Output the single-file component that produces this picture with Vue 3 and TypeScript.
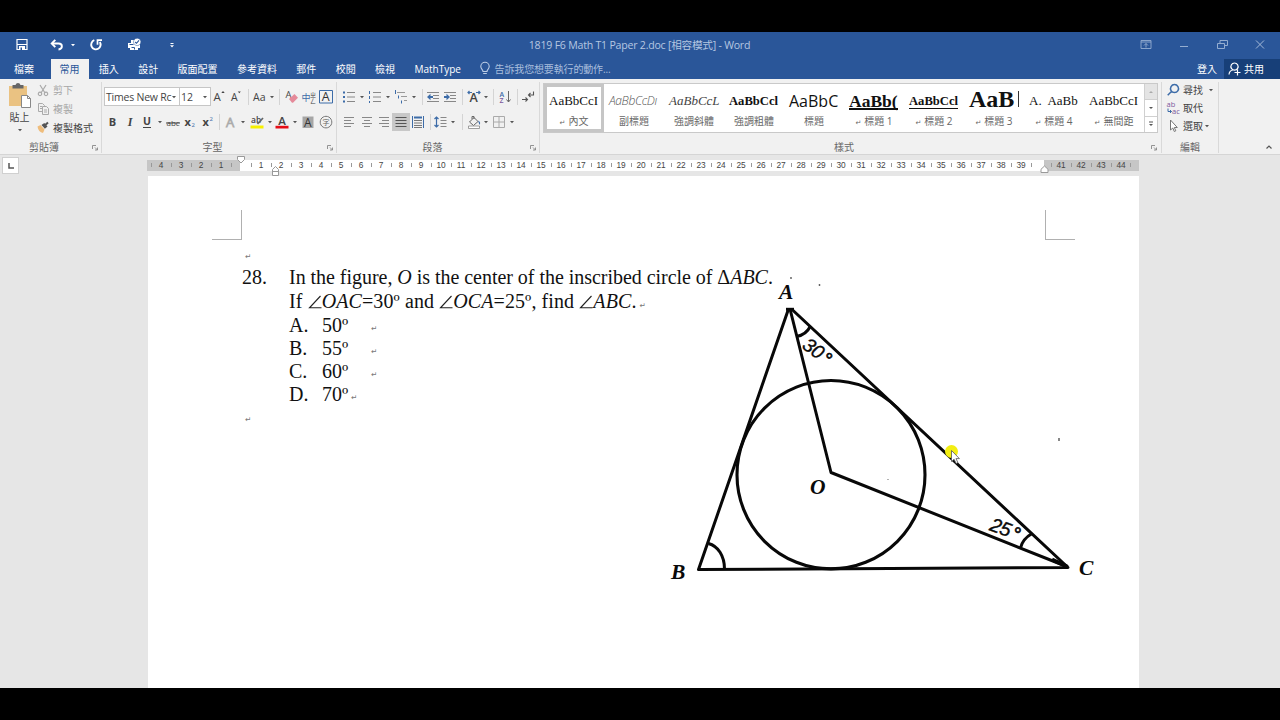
<script setup lang="ts">
import { h } from 'vue'

interface Shape {
  d?: string
  f?: string
  s?: string
  w?: number
  t?: string
  x?: number
  y?: number
  size?: number
  font?: string
  weight?: number
  italic?: boolean
}
interface Tool {
  icon: string
  w: number
  on?: boolean
}
interface StyleItem {
  sample: string
  label: string
  kind: string
  mark?: boolean
}

const dark = '#444'
const blue = '#3d6ca8'
const sans = 'Open Sans'
const txt = (t: string, x: number, y: number, size: number, f = dark, weight = 400, italic = false, font = sans): Shape =>
  ({ t, x, y, size, f, weight, italic, font })
const line = (d: string, s = '#666', w = 1): Shape => ({ d, s, w, f: 'none' })
const fill = (d: string, f = dark): Shape => ({ d, f })

const icons: Record<string, Shape[]> = {
  save: [line('M5 4.500h10v10H5z', '#fff', 1.200), line('M5 9.500h10', '#fff', 1), fill('M7 11h6v4H7z', '#fff'), fill('M8.500 12.500h1.500V15H8.500z', '#2a5699')],
  undo: [line('M5 8.500h6.500c4.500 0 4.500 5.500 0 6', '#fff', 1.900), line('M8.300 4.800 4.700 8.500l3.600 3.700', '#fff', 1.900)],
  redo: [line('M8.300 5.200A4.700 4.700 0 1 0 13.800 7', '#fff', 1.900), line('M11.500 9.800V5.200H16', '#fff', 1.700)],
  print: [fill('M4 8h3V5h6v3h3v5h-2v2H6v-2H4z', '#fff'), line('M5.500 9.500h4m-2 3h3v2', '#2a5699'), { d: 'M13.200 3.200a3.700 3.700 0 1 1-.01 0z', f: '#fff', s: '#2a5699', w: .5 }, line('M11.200 7l1.300 1.300 2.500-3', '#2a5699', 1.100)],
  customize: [line('M8.500 8.500h3', '#fff'), fill('M8 10.300h4L10 12.500z', '#fff')],
  downw: [fill('M8 9h4l-2 2.300z', '#fff')],
  down: [fill('M8 9h4l-2 2.300z', '#555')],
  sep: [line('M10.500 2v16', '#d4d4d4')],
  cut: [line('M7 5l5 8M13 5l-5 8', '#a9a9a9', 1.200), line('M7 12.200a1.700 1.700 0 1 0 .01 0M13 12.200a1.700 1.700 0 1 0 .01 0', '#a9a9a9', 1.200)],
  copy: [line('M5.500 4.500h4l2 2v6h-6z', '#aaa'), { d: 'M9.500 7.500h4l2 2v6h-6z', f: '#f1f1f1', s: '#aaa', w: 1 }, line('M7 7.500h2m-2 2h2m2 1.500h3m-3 2h3', '#aaa')],
  painter: [fill('M4.500 8.500l3-1.500 4 4.500-1.500 3.500c-3-.5-5-3-5.500-6.500z', '#efbd7c'), fill('M8.500 7l2.800-2 3.200 3.600-2.600 2.200z', '#555'), line('M12 7.200l3-2.700', '#555', 2)],
  bulb: [line('M8 12.500c0-2-2.200-2.500-2.200-5a4.200 4.200 0 0 1 8.400 0c0 2.500-2.200 3-2.200 5zM8.200 14.500h3.600', '#bccde6', 1.100)],
  grow: [txt('A', 3.500, 14, 11.500), fill('M11.300 6l1.700-2 1.700 2z', '#444')],
  shrink: [txt('A', 4, 14, 10.500), fill('M10.800 4.500l1.500 1.700 1.500-1.700z', '#444')],
  case: [txt('Aa', 3, 14, 10.500)],
  eraser: [txt('A', 3.500, 11, 9.500), fill('M7 12l5.500-5 3.500 3.800-5 5h-1z', '#e58a9a')],
  phonetic: [txt('中', 2.500, 13.500, 9, blue, 400, false, 'Noto Sans CJK TC'), txt('ㄓ', 11, 9.500, 6, dark, 400, false, 'Noto Sans CJK TC'), txt('ㄥ', 11, 15.500, 6, dark, 400, false, 'Noto Sans CJK TC')],
  boxed: [line('M3.500 3.500h13v12.500h-13z', blue), txt('A', 5.700, 14.200, 12.500, '#333')],
  bold: [txt('B', 6.800, 14, 11, dark, 700)],
  italic: [txt('I', 7.800, 14, 12, dark, 700, true, 'Liberation Serif')],
  under: [txt('U', 6, 13, 10.500, dark, 700), line('M6 15.500h8', dark)],
  strike: [txt('abc', 3.500, 13.500, 8, dark, 400), line('M3 11h14', dark)],
  sub: [txt('x', 4.500, 13.500, 11, dark, 700), txt('2', 11.500, 15, 6, blue)],
  sup: [txt('x', 4.500, 14, 11, dark, 700), txt('2', 11.500, 9, 6, blue)],
  effect: [{ ...txt('A', 5, 14.500, 13, '#fafafa'), s: '#aaa', w: .8 }],
  high: [txt('ab', 4, 11, 8.500, dark, 600), line('M10.500 12l5.500-6', '#666', 1.700), fill('M3.500 13.500h13v3h-13z', '#f6f000')],
  color: [txt('A', 6.200, 12.500, 11.500, dark, 600), fill('M3.500 13.800h13v2.700h-13z', '#e60d16')],
  shade: [fill('M4.500 4.500h11v11.500h-11z', '#a6a6a6'), txt('A', 6, 14.500, 12, '#333')],
  circled: [line('M10 4.300a5.800 5.800 0 1 0 .01 0', '#777'), txt('字', 6.500, 12.700, 7, '#666', 400, false, 'Noto Sans CJK TC')],
  bullets: [fill('M4 4.500h2v2H4zm0 4.500h2v2H4zm0 4.500h2v2H4z', blue), line('M8 5.500h8m-8 4.500h8m-8 4.500h8', '#888')],
  numbers: [line('M4.500 4v3m0 2v3m0 2v2', blue), line('M8 5.500h8m-8 4.500h8m-8 4.500h8', '#888')],
  multi: [line('M4.500 3v4m3 1.500v3m3 2v3', blue), line('M6 5.500h8m-4 4h6m-3 4h3', '#999')],
  outdent: [line('M4 5.500h12M4 14.500h12m-6-6h6m-6 3h6', '#888'), fill('M4 10l3.500-3.200v2.200H10v2H7.500v2.200z', blue)],
  indent: [line('M4 5.500h12M4 14.500h12m-6-6h6m-6 3h6', '#888'), fill('M10 10L6.500 6.800V9H4v2h2.500v2.200z', blue)],
  scale: [txt('A', 5.500, 15, 12.500, dark, 600), line('M4 5.500h4m4 0h4M5.500 4L4 5.500 5.500 7m9-3L16 5.500 14.500 7', blue, 1.200)],
  sort: [txt('A', 4.500, 9.500, 7, blue, 600), txt('Z', 4.500, 16, 7, '#7d5a9d', 600), line('M13.500 4v11m-2-2.500l2 2.500 2-2.500', '#666')],
  marks: [line('M15.500 4.500v3.500H10.500m2-2l-2 2 2 2M4 12.500H9.500m-2-2l2 2-2 2', '#555', 1.100)],
  left: [line('M5 5.500h10m-10 3h7m-7 3h10m-10 3h7', '#888')],
  center: [line('M5 5.500h10m-8 3h6m-8 3h10m-8 3h6', '#888')],
  right: [line('M5 5.500h10m-7 3h7m-10 3h10m-7 3h7', '#888')],
  justify: [line('M4.500 5.500h11m-11 3h11m-11 3h11m-11 3h11', '#555')],
  distribute: [line('M4.500 4v12m11-12v12', blue), line('M6 5.500h8', blue, 2), line('M6 8.500h8m-8 2.500h8m-8 2.500h8m-8 2h8', '#777')],
  spacing: [line('M5.500 5v10M3.500 7l2-2 2 2m-4 6l2 2 2-2', blue, 1.200), line('M9.500 5.500h6m-6 3h6m-6 3h6m-6 3h6', '#888')],
  bucket: [line('M5.500 10l4.500-4.500 4 4-4.500 4zM8 7V4.500h2V7', '#666'), fill('M14 8.500c2.500 1 2.500 3 1.500 4.500z', blue), { d: 'M4.500 14h11v2.500h-11z', f: '#fff', s: '#888', w: .8 }],
  borders: [line('M4.500 4.500h11v11h-11zM10 4.500v11M4.500 10h11', '#aaa')],
  find: [line('M11.500 4.500a4 4 0 1 0 .01 0M8.700 11.300L4.700 15.300', '#3d6ca8', 1.500)],
  replace: [txt('ab', 3.500, 9, 7.500, '#7d5a9d'), txt('ac', 9, 15.500, 7.500, '#7d5a9d'), line('M5 10.500v3h3.500M7 12l1.500 1.500L7 15', blue)],
  select: [{ d: 'M7.500 4v10l2.300-2 1.500 3.500 1.500-.7-1.500-3.300h3z', f: '#fff', s: '#777', w: 1 }],
  launcher: [line('M7.500 12V8.500H11M10 10.500l2.500 2.500m0-2.500V13H10', '#888', .9)],
  ribbon: [line('M5 5.500h10v8H5zM5 7h10M10 12.500V8.500m-2 2l2-2 2 2', '#94add0', .9)],
  min: [line('M6 11.500h8', '#94add0')],
  restore: [line('M5.500 8.500h7v5h-7zM8 8V5.500h7.500v5H13', '#94add0')],
  close: [line('M6 5.500l8 8m0-8l-8 8', '#a4b9d8')],
  person: [line('M10.500 4a3.600 3.600 0 1 0 .01 0M5 15.500c.3-3 2-4.300 4-4.500M13.500 10.500v6m-3-3h6', '#fff', 1.200)],
  caret: [line('M7.500 11.500L10 9l2.500 2.500', '#555', 1.200)],
}

const t = (icon: string, w: number, on = false): Tool => ({ icon, w, on })
const quickTools: Tool[] = [t('save', 24), t('gap', 11), t('undo', 24), t('downw', 7), t('gap', 8), t('redo', 24), t('gap', 13), t('print', 26), t('gap', 15), t('customize', 20)]
const windowTools: Tool[] = [t('ribbon', 38), t('min', 38), t('restore', 38), t('close', 38)]
const fontTop: Tool[] = [t('grow', 18), t('shrink', 16), t('sep', 6), t('case', 18), t('down', 5), t('sep', 10), t('eraser', 16), t('phonetic', 18), t('boxed', 16)]
const fontBottom: Tool[] = [t('bold', 18), t('italic', 18), t('under', 16), t('down', 10), t('strike', 16), t('sub', 18), t('sup', 18), t('sep', 4), t('effect', 20), t('down', 4), t('high', 23), t('down', 4), t('color', 20), t('down', 6), t('shade', 20), t('circled', 16)]
const paraTop: Tool[] = [t('bullets', 18), t('down', 8), t('numbers', 18), t('down', 8), t('multi', 18), t('down', 7), t('sep', 10), t('outdent', 12), t('indent', 22), t('sep', 2), t('scale', 21), t('down', 3), t('sep', 12), t('sort', 12), t('sep', 12), t('marks', 10)]
const paraBottom: Tool[] = [t('left', 18), t('center', 18), t('right', 16), t('justify', 18, true), t('distribute', 16), t('sep', 8), t('spacing', 14), t('down', 10), t('sep', 8), t('bucket', 16), t('down', 8), t('borders', 18), t('down', 8)]

const tabs: string[] = ['檔案', '常用', '插入', '設計', '版面配置', '參考資料', '郵件', '校閱', '檢視', 'MathType']

const styles: StyleItem[] = [
  { sample: 'AaBbCcI', label: '內文', kind: 'serif', mark: true },
  { sample: 'AaBbCcDı', label: '副標題', kind: 'sub' },
  { sample: 'AaBbCcL', label: '強調斜體', kind: 'serif slant' },
  { sample: 'AaBbCcl', label: '強調粗體', kind: 'serif strong' },
  { sample: 'AaBbC', label: '標題', kind: 'title' },
  { sample: 'AaBb(', label: '標題 1', kind: 'h1', mark: true },
  { sample: 'AaBbCcl', label: '標題 2', kind: 'serif strong lined', mark: true },
  { sample: 'AaB', label: '標題 3', kind: 'h3', mark: true },
  { sample: 'A.  AaBb', label: '標題 4', kind: 'serif', mark: true },
  { sample: 'AaBbCcI', label: '無間距', kind: 'serif', mark: true },
]

const ruler: string[] = []
for (let n = -4; n <= 44; n++) ruler.push(n === 0 || n === 40 ? '' : String(Math.abs(n)))

const answers = [
  { key: 'A.', value: '50º' },
  { key: 'B.', value: '55º' },
  { key: 'C.', value: '60º' },
  { key: 'D.', value: '70º' },
]

const Icon = (p: { name: string }) =>
  h('svg', { class: 'icon', width: 20, height: 20, viewBox: '0 0 20 20' },
    (icons[p.name] ?? []).map(s => s.t
      ? h('text', { x: s.x, y: s.y, fill: s.f, stroke: s.s, 'stroke-width': s.w, 'font-size': s.size, 'font-family': s.font, 'font-weight': s.weight, 'font-style': s.italic ? 'italic' : 'normal' }, s.t)
      : h('path', { d: s.d, fill: s.f ?? 'none', stroke: s.s ?? 'none', 'stroke-width': s.w })))
Icon.props = ['name']
</script>

<template>
  <div class="screen">
    <header class="top">
      <div class="titlebar">
        <div class="tools quick">
          <span v-for="(q, i) in quickTools" :key="i" class="tool" :style="{ width: q.w + 'px' }"><Icon :name="q.icon" /></span>
        </div>
        <div class="doc-title">1819 F6 Math T1 Paper 2.doc [相容模式] - Word</div>
        <div class="tools window">
          <span v-for="q in windowTools" :key="q.icon" class="tool" :style="{ width: q.w + 'px' }"><Icon :name="q.icon" /></span>
        </div>
      </div>
      <nav class="tabs">
        <span v-for="tab in tabs" :key="tab" class="tab" :class="{ active: tab === '常用' }">{{ tab }}</span>
        <span class="tell"><Icon name="bulb" /><span>告訴我您想要執行的動作...</span></span>
        <span class="login">登入</span>
        <span class="share"><Icon name="person" /><span>共用</span></span>
      </nav>
    </header>

    <section class="ribbon">
      <div class="group clipboard">
        <div class="body">
          <div class="paste">
            <svg width="26" height="27" viewBox="0 0 26 27">
              <path d="M2 4h18v20H2z" fill="#eac282" />
              <path d="M5.500 3h3a2.600 2.600 0 0 1 5 0h3v3.500h-11z" fill="#666" />
              <path d="M14.500 13.500h6l3 3v9h-9z" fill="#fff" stroke="#888" />
              <path d="M20.500 13.500v3h3" fill="none" stroke="#888" />
            </svg>
            <span>貼上</span>
            <Icon name="down" />
          </div>
          <div class="cmds">
            <span class="cmd off"><Icon name="cut" />剪下</span>
            <span class="cmd off"><Icon name="copy" />複製</span>
            <span class="cmd"><Icon name="painter" />複製格式</span>
          </div>
        </div>
        <div class="label">剪貼簿<span class="launch"><Icon name="launcher" /></span></div>
      </div>

      <div class="group font">
        <div class="row">
          <span class="combo face"><b>Times New Rc</b><Icon name="down" /></span>
          <span class="combo size"><b>12</b><Icon name="down" /></span>
          <span v-for="(q, i) in fontTop" :key="i" class="tool" :style="{ width: q.w + 'px' }"><Icon :name="q.icon" /></span>
        </div>
        <div class="row">
          <span v-for="(q, i) in fontBottom" :key="i" class="tool" :style="{ width: q.w + 'px' }"><Icon :name="q.icon" /></span>
        </div>
        <div class="label">字型<span class="launch"><Icon name="launcher" /></span></div>
      </div>

      <div class="group para">
        <div class="row">
          <span v-for="(q, i) in paraTop" :key="i" class="tool" :style="{ width: q.w + 'px' }"><Icon :name="q.icon" /></span>
        </div>
        <div class="row">
          <span v-for="(q, i) in paraBottom" :key="i" class="tool" :class="{ on: q.on }" :style="{ width: q.w + 'px' }"><Icon :name="q.icon" /></span>
        </div>
        <div class="label">段落<span class="launch"><Icon name="launcher" /></span></div>
      </div>

      <div class="group styles">
        <div class="gallery">
          <div v-for="(s, i) in styles" :key="i" class="style" :class="{ chosen: i === 0 }">
            <span class="sample" :class="s.kind"><span>{{ s.sample }}</span></span>
            <span class="name"><i v-if="s.mark">↵</i>{{ s.label }}</span>
          </div>
          <div class="scroll">
            <span class="dim"><svg width="6" height="4" viewBox="0 0 6 4"><path d="M1 3h4L3 1z" fill="#aaa" /></svg></span>
            <span><svg width="6" height="4" viewBox="0 0 6 4"><path d="M1 1h4L3 3z" fill="#555" /></svg></span>
            <span><svg width="6" height="6" viewBox="0 0 6 6"><path d="M1 .5h4v1H1zM1 3h4L3 5z" fill="#555" /></svg></span>
          </div>
        </div>
        <div class="label">樣式<span class="launch"><Icon name="launcher" /></span></div>
      </div>

      <div class="group edit">
        <div class="cmds">
          <span class="cmd"><Icon name="find" />尋找<Icon name="down" /></span>
          <span class="cmd"><Icon name="replace" />取代</span>
          <span class="cmd tight"><Icon name="select" />選取<Icon name="down" /></span>
        </div>
        <div class="label">編輯</div>
      </div>
      <div class="collapse"><Icon name="caret" /></div>
    </section>

    <main class="work">
      <div class="corner"><svg width="6" height="6" viewBox="0 0 6 6"><path d="M1 0v5h5" fill="none" stroke="#555" stroke-width="1.500" /></svg></div>
      <div class="column">
        <div class="ruler">
          <span v-for="(n, i) in ruler" :key="i" class="unit">{{ n }}</span>
          <svg class="marker first" width="10" height="8" viewBox="0 0 10 8"><path d="M1.500.5h7v3L5 7 1.500 3.500z" fill="#fff" stroke="#999" /></svg>
          <svg class="marker hanging" width="9" height="11" viewBox="0 0 9 11"><path d="M1.500 10.500v-6l3-3 3 3v6zM1.500 6.500h6" fill="#fff" stroke="#999" /></svg>
          <svg class="marker end" width="9" height="8" viewBox="0 0 9 8"><path d="M1 7.500V4.300L4.500 1 8 4.300v3.200z" fill="#fff" stroke="#999" /></svg>
        </div>
        <article class="page">
          <div class="crops"><i class="crop lt"></i><i class="crop rt"></i></div>
          <div class="blank"><span class="ret">↵</span></div>
          <div class="question">
            <span class="num">28.</span>
            <div class="text">
              <p class="l1">In the figure, <em>O</em> is the center of the inscribed circle of Δ<em>ABC</em>.</p>
              <p class="l2">If <svg class="angle" width="14" height="14" viewBox="0 0 14 14"><path d="M12.500 1L1.500 12.800H13.500" fill="none" stroke="#222" stroke-width="1.100" /></svg><em>OAC</em>=30º and <svg class="angle" width="14" height="14" viewBox="0 0 14 14"><path d="M12.500 1L1.500 12.800H13.500" fill="none" stroke="#222" stroke-width="1.100" /></svg><em>OCA</em>=25º, find <svg class="angle" width="14" height="14" viewBox="0 0 14 14"><path d="M12.500 1L1.500 12.800H13.500" fill="none" stroke="#222" stroke-width="1.100" /></svg><em>ABC</em>.<span class="ret">↵</span></p>
              <p v-for="a in answers" :key="a.key" class="answer"><span class="key">{{ a.key }}</span><span class="val">{{ a.value }}</span><span class="ret">↵</span></p>
            </div>
          </div>
          <div class="blank last"><span class="ret">↵</span></div>

          <svg class="figure" width="450" height="330" viewBox="650 260 450 330">
            <g fill="none" stroke="#080808" stroke-width="3" stroke-linejoin="round">
              <path d="M788.500 309L698.500 569.500L1068 567.500L791.500 309" />
              <path d="M786 309.300h8" />
              <path d="M790 309L831 472.500L1068 567" />
              <path d="M1052 559.500L1067 566.500" stroke-width="4" />
              <ellipse cx="831" cy="474.700" rx="94" ry="94.200" stroke-width="3.100" />
              <path d="M796.500 336.500C803 335.500 808 331 810.500 326" />
              <path d="M708.500 543.500C718 546 724.500 556 724.500 569" />
              <path d="M1020.500 548C1022 541 1026 537 1032 533.500" />
            </g>
            <g class="letters">
              <text x="779" y="299">A</text>
              <text x="671" y="578.500">B</text>
              <text x="1079" y="574.500">C</text>
              <text x="810" y="493.500">O</text>
            </g>
            <text class="deg" transform="translate(801 347.500) rotate(36)">30<tspan class="ring" dx="3" dy="1">°</tspan></text>
            <text class="deg" transform="translate(988.500 530) rotate(20)">25<tspan class="ring" dx="3" dy="1">°</tspan></text>
            <g fill="#555">
              <circle cx="791" cy="278" r=".9" /><circle cx="819.500" cy="285" r=".9" /><circle cx="888" cy="479.500" r=".6" />
              <path d="M1058.300 438h1.400v3h-1.400z" />
            </g>
            <circle cx="951.500" cy="451.500" r="6.500" fill="#f3ee12" />
            <path d="M951.500 450.500v11l2.600-2.200 2 4.200 1.800-.9-1.900-4h3.400z" fill="#fff" stroke="#555" stroke-width=".8" />
          </svg>
        </article>
      </div>
    </main>
  </div>
</template>

<style>
body { margin: 0; background: #000; }
.icon { flex: none; overflow: visible; display: block; }
</style>

<style scoped>
.screen { box-sizing: border-box; width: 1280px; height: 720px; padding: 32px 0; background: #000; display: flex; flex-direction: column; overflow: hidden; font: 10px/14px "Open Sans", "Noto Sans CJK TC", sans-serif; color: #555; }
.top { height: 47px; background: #2a5699; color: #fff; flex: none; }
.titlebar { height: 26px; display: grid; grid-template-columns: 400px 1fr 400px; align-items: center; }
.tools, .row { display: flex; align-items: center; }
.tool { display: flex; justify-content: center; flex: none; }
.quick { padding-left: 10px; }
.window { padding-left: 247px; }
.doc-title { text-align: center; font-size: 10.600px; letter-spacing: -.23px; color: #b5c7e1; white-space: nowrap; margin-right: 1px; }
.tabs { display: flex; height: 21px; align-items: flex-end; font-size: 10px; white-space: nowrap; }
.tab { height: 20px; line-height: 20px; padding: 0 9.700px; }
.tab:first-child { padding: 0 16.500px 0 14px; }
.tab.active { background: #f1f1f1; color: #2a5699; padding: 0 9px; margin-right: .6px; }
.tab:nth-child(10) { font-size: 10px; width: 45.500px; }
.tell { display: flex; align-items: center; height: 19px; padding-bottom: 1px; color: #a9bedd; margin-left: 5px; width: 700px; letter-spacing: -.15px; }
.login { height: 20px; line-height: 20px; margin-left: auto; margin-right: 7px; }
.share { width: 56px; height: 20px; background: #173f78; display: flex; align-items: center; }

.ribbon { height: 75px; background: #f1f1f1; border-bottom: 1px solid #d5d5d5; display: flex; flex: none; white-space: nowrap; }
.group { display: flex; flex-direction: column; box-sizing: border-box; border-right: 1px solid #d9d9d9; height: 71px; margin-top: 3px; }
.label { margin-top: auto; height: 14px; line-height: 14px; margin-bottom: -1px; text-align: center; color: #666; position: relative; }
.launch { position: absolute; right: -4px; top: -3px; }
.clipboard { width: 102px; }
.clipboard .label { padding-right: 13px; }
.body { display: flex; }
.paste { width: 39px; display: flex; flex-direction: column; align-items: center; }
.paste span { line-height: 13px; color: #444; margin-top: 2px; }
.paste svg:last-child { margin-top: -4px; }
.cmds { display: flex; flex-direction: column; }
.cmd { display: flex; align-items: center; height: 18.800px; color: #444; }
.clipboard .cmds { margin-top: -1px; }
.clipboard .cmd { margin-left: -6px; }
.cmd.off { color: #a6a6a6; }
.font { width: 235px; padding-left: 1px; }
.row { box-sizing: border-box; height: 27px; padding-top: 2px; flex: none; }
.row + .row { height: 25px; padding: 0; }
.font .label { padding-right: 14px; }
.combo { box-sizing: border-box; height: 19px; border: 1px solid #c6c6c6; background: #fff; display: flex; align-items: center; justify-content: space-between; font-size: 10.500px; color: #444; }
.combo b { font-weight: 400; padding-left: 1px; }
.combo .icon { margin-right: -5px; margin-left: -9px; }
.face { width: 76px; margin-left: 1px; letter-spacing: -.22px; }
.size { width: 32px; margin-left: -1px; }
.para { width: 203px; padding-left: 3px; }
.para .label { padding-right: 14px; }
.on { background: #c8c8c8; height: 18px; align-items: center; }

.styles { width: 622px; padding-left: 3px; }
.gallery { display: flex; box-sizing: border-box; width: 615px; height: 50px; border: 1px solid #c9c9c9; background: #fff; margin-top: 1px; }
.style { width: 60px; box-sizing: border-box; display: flex; flex-direction: column; align-items: center; padding-top: 4px; border: 0 solid #c6c6c6; }
.style.chosen { border-width: 3px; padding-top: 1px; }
.style.chosen .sample { margin: 0 -3px; }
.sample { width: 50px; height: 26px; line-height: 26px; color: #222; white-space: pre; flex: none; }
.serif { font-family: "Liberation Serif", serif; font-size: 13px; color: #111; }
.sub { font-size: 12px; font-style: italic; font-weight: 300; color: #555; letter-spacing: -.35px; }
.slant { font-style: italic; color: #444; }
.strong { font-weight: 700; font-size: 12.600px; }
.lined > span { border-bottom: 1px solid #111; }
.title { font-size: 16px; color: #111; }
.h1 { font: 700 17.500px/25px "Liberation Serif", serif; color: #111; }
.h1 > span { border-bottom: 2px solid #111; display: inline-block; height: 20px; line-height: 26px; }
.h3 { font: 700 24px/23px "Liberation Serif", serif; color: #111; display: flex; justify-content: space-between; }
.h3::after { content: ""; width: 1px; height: 16px; background: #333; margin-top: 3px; }
.name { line-height: 14px; color: #666; }
.name i { font: 7px "DejaVu Sans", sans-serif; margin-right: 3px; }
.scroll { margin-left: auto; width: 12px; border-left: 1px solid #d0d0d0; display: flex; flex-direction: column; }
.scroll span { flex: 1; display: flex; align-items: center; justify-content: center; border-bottom: 1px solid #d0d0d0; }
.scroll span:last-child { border: 0; }
.scroll .dim { background: #e4e4e4; }
.styles .label { padding-right: 16px; }
.styles .launch { right: -3px; }
.edit { width: 57px; }
.edit .cmds { padding-left: 2px; margin-top: -1px; }
.edit .cmd { height: 18px; margin-left: -1px; }
.edit .cmd .icon:not(:first-child) { margin-left: -2px; }
.edit .cmd.tight .icon:not(:first-child) { margin-left: -6px; }
.collapse { margin-left: auto; margin-right: 1px; display: flex; align-items: flex-end; height: 78px; }

.work { flex: 1; background: #e6e6e6; display: flex; min-height: 0; }
.corner { box-sizing: border-box; width: 17px; height: 17px; margin: 2px 130px 0 2px; background: #fff; border: 1px solid #d0d0d0; display: flex; align-items: center; justify-content: center; flex: none; }
.column { width: 992px; display: flex; flex-direction: column; margin-left: -2px; }
.ruler { position: relative; margin-top: 5px; height: 11px; box-sizing: border-box; padding-left: 4px; display: flex; background: linear-gradient(90deg, #c6c6c6 93px, #fff 93px, #fff 897px, #c6c6c6 897px); font: 8.300px/11px "Liberation Sans", sans-serif; color: #444; flex: none; }
.unit { width: 20px; flex: none; text-align: center; background: linear-gradient(#999, #999) 0 3px / 1px 4px no-repeat; }
.unit:last-of-type { background: linear-gradient(#999, #999) 0 3px / 1px 4px no-repeat, linear-gradient(#999, #999) 100% 3px / 1px 4px no-repeat; }
.marker { position: absolute; }
.first { left: 89px; top: -4px; }
.hanging { left: 124px; top: 5px; }
.end { left: 893px; top: 5px; }
.page { position: relative; flex: 1; margin: 5px 0 0 1px; background: #fff; font-family: "Liberation Serif", serif; color: #111; box-sizing: border-box; }
.crops { display: flex; justify-content: space-between; padding: 34px 64px 0 64px; }
.crop { width: 29px; height: 29px; border: 0 solid #b0b0b0; border-bottom-width: 1px; }
.crop.lt { border-right-width: 1px; }
.crop.rt { border-left-width: 1px; }
.ret { font: 7.500px/10px "DejaVu Sans", sans-serif; color: #777; }
.blank { height: 25px; padding-left: 97px; box-sizing: border-box; display: flex; align-items: center; padding-top: 8px; }
.question { display: flex; padding-left: 94px; font-size: 20px; line-height: 24px; }
.num { width: 47px; }
.text p { margin: 0; white-space: pre; }
.l1, .l2 { height: 24.300px; }
.l1 { letter-spacing: -.035px; }
.l2 { letter-spacing: .1px; }
.angle { vertical-align: -1px; }
.l2 .ret { margin-left: 3px; }
.text .answer { display: flex; height: 23.100px; line-height: 23px; align-items: center; }
.key { width: 33px; }
.val { width: 49px; }
.answer:last-child .val { width: 29px; }
.answer .ret { padding-top: 7px; }
.last { padding-top: 4px; }
.figure { position: absolute; left: 502px; top: 84px; }
.letters { font: italic 700 21.500px "Liberation Serif", serif; fill: #0a0a0a; }
.deg { font: italic 400 19.500px "Liberation Sans", sans-serif; letter-spacing: -.4px; fill: #0a0a0a; stroke: #0a0a0a; stroke-width: .35px; }
.ring { font-style: normal; stroke-width: .7px; }
</style>
